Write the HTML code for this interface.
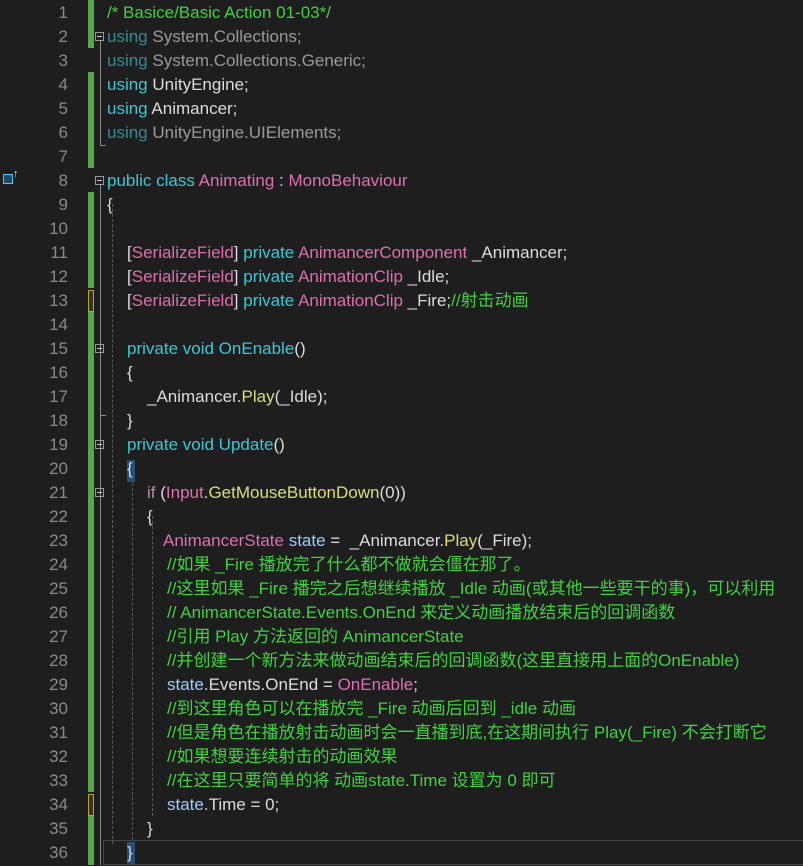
<!DOCTYPE html>
<html><head><meta charset="utf-8"><style>
body{margin:0;width:803px;height:865px;background:#1e1e1e;overflow:hidden;position:relative;font-family:"Liberation Sans","Noto Sans CJK SC",sans-serif;font-size:17px;}
.n{position:absolute;left:0;width:68px;text-align:right;color:#8a8a8a;height:24px;line-height:26px}
.l{position:absolute;height:24px;line-height:26px;white-space:pre;color:#dcdcdc}
.k{color:#3ec7d6}.t{color:#e06fb0}.c{color:#3fd23f}.m{color:#dcdc7a}.d{opacity:.65}.p{color:#9ccfff}.g{color:#b48ead}
.gb{position:absolute;left:88px;width:6px;background:#57a64a}
.yb{position:absolute;left:88px;width:4px;height:20px;border:1px solid #b8a430;background:#3a3418}
.f{position:absolute;left:95px;width:9px;height:9px;border:1px solid #9a9a9a;box-sizing:border-box}
.f:after{content:"";position:absolute;left:1px;top:3px;width:5px;height:1px;background:#ccc}
.v{position:absolute;width:0;border-left:1px solid #8a8a8a}
.h{position:absolute;height:0;border-top:1px solid #8a8a8a}
.dg{position:absolute;width:0;border-left:1px dashed #5a5a5a}
</style></head><body>
<div class="gb" style="top:0;height:48px"></div>
<div class="gb" style="top:72px;height:96px"></div>
<div class="gb" style="top:192px;height:96px"></div>
<div class="yb" style="top:290px"></div>
<div class="gb" style="top:312px;height:480px"></div>
<div class="yb" style="top:794px"></div>
<div class="gb" style="top:816px;height:49px"></div>
<div class="f" style="top:32px"></div><div class="v" style="left:100px;top:41px;height:104px"></div><div class="h" style="left:100px;top:145px;width:6px"></div>
<div class="f" style="top:176px"></div><div class="v" style="left:100px;top:185px;height:680px"></div>
<div class="f" style="top:344px"></div><div class="f" style="top:440px"></div><div class="f" style="top:488px"></div>
<div class="h" style="left:100px;top:415px;width:6px"></div>
<div class="dg" style="left:112px;top:204px;height:640px"></div>
<div class="dg" style="left:132px;top:468px;height:372px"></div>
<div class="dg" style="left:152px;top:516px;height:300px"></div>
<div style="position:absolute;left:103px;top:840px;width:700px;height:23px;border:1px solid #464646;border-right:none"></div>
<div style="position:absolute;left:127px;top:842px;width:8px;height:22px;background:#264f78"></div>
<div style="position:absolute;left:127px;top:460px;width:8px;height:22px;background:#264f78"></div>
<div style="position:absolute;left:3px;top:174px;width:8px;height:8px;border:1px solid #4fc1ff;background:#1c4a6a"></div>
<div style="position:absolute;left:13px;top:168px;color:#ddd;font-size:11px">↑</div>
<div class="n" style="top:0">1</div><div class="n" style="top:24px">2</div><div class="n" style="top:48px">3</div><div class="n" style="top:72px">4</div><div class="n" style="top:96px">5</div><div class="n" style="top:120px">6</div><div class="n" style="top:144px">7</div><div class="n" style="top:168px">8</div><div class="n" style="top:192px">9</div><div class="n" style="top:216px">10</div><div class="n" style="top:240px">11</div><div class="n" style="top:264px">12</div><div class="n" style="top:288px">13</div><div class="n" style="top:312px">14</div><div class="n" style="top:336px">15</div><div class="n" style="top:360px">16</div><div class="n" style="top:384px">17</div><div class="n" style="top:408px">18</div><div class="n" style="top:432px">19</div><div class="n" style="top:456px">20</div><div class="n" style="top:480px">21</div><div class="n" style="top:504px">22</div><div class="n" style="top:528px">23</div><div class="n" style="top:552px">24</div><div class="n" style="top:576px">25</div><div class="n" style="top:600px">26</div><div class="n" style="top:624px">27</div><div class="n" style="top:648px">28</div><div class="n" style="top:672px">29</div><div class="n" style="top:696px">30</div><div class="n" style="top:720px">31</div><div class="n" style="top:744px">32</div><div class="n" style="top:768px">33</div><div class="n" style="top:792px">34</div><div class="n" style="top:816px">35</div><div class="n" style="top:840px">36</div>
<div class="l c" style="top:0;left:107px">/* Basice/Basic Action 01-03*/</div>
<div class="l d" style="top:24px;left:107px"><span class="k">using</span> System.Collections;</div>
<div class="l d" style="top:48px;left:107px"><span class="k">using</span> System.Collections.Generic;</div>
<div class="l" style="top:72px;left:107px"><span class="k">using</span> UnityEngine;</div>
<div class="l" style="top:96px;left:107px"><span class="k">using</span> Animancer;</div>
<div class="l d" style="top:120px;left:107px"><span class="k">using</span> UnityEngine.UIElements;</div>
<div class="l" style="top:168px;left:107px"><span class="k">public class</span> <span class="t">Animating</span> : <span class="t">MonoBehaviour</span></div>
<div class="l" style="top:192px;left:107px">{</div>
<div class="l" style="top:240px;left:127px">[<span class="t">SerializeField</span>] <span class="k">private</span> <span class="t">AnimancerComponent</span> _Animancer;</div>
<div class="l" style="top:264px;left:127px">[<span class="t">SerializeField</span>] <span class="k">private</span> <span class="t">AnimationClip</span> _Idle;</div>
<div class="l" style="top:288px;left:127px">[<span class="t">SerializeField</span>] <span class="k">private</span> <span class="t">AnimationClip</span> _Fire;<span class="c">//射击动画</span></div>
<div class="l" style="top:336px;left:127px"><span class="k">private void</span> <span class="k">OnEnable</span>()</div>
<div class="l" style="top:360px;left:127px">{</div>
<div class="l" style="top:384px;left:147px">_Animancer.<span class="m">Play</span>(_Idle);</div>
<div class="l" style="top:408px;left:127px">}</div>
<div class="l" style="top:432px;left:127px"><span class="k">private void</span> <span class="k">Update</span>()</div>
<div class="l" style="top:456px;left:127px">{</div>
<div class="l" style="top:480px;left:147px"><span class="g">if</span> (<span class="t">Input</span>.<span class="m">GetMouseButtonDown</span>(0))</div>
<div class="l" style="top:504px;left:147px">{</div>
<div class="l" style="top:528px;left:163px"><span class="t">AnimancerState</span> <span class="p">state</span> =  _Animancer.<span class="m">Play</span>(_Fire);</div>
<div class="l c" style="top:552px;left:167px">//如果 _Fire 播放完了什么都不做就会僵在那了。</div>
<div class="l c" style="top:576px;left:167px">//这里如果 _Fire 播完之后想继续播放 _Idle 动画(或其他一些要干的事)，可以利用</div>
<div class="l c" style="top:600px;left:167px">// AnimancerState.Events.OnEnd 来定义动画播放结束后的回调函数</div>
<div class="l c" style="top:624px;left:167px">//引用 Play 方法返回的 AnimancerState</div>
<div class="l c" style="top:648px;left:167px">//并创建一个新方法来做动画结束后的回调函数(这里直接用上面的OnEnable)</div>
<div class="l" style="top:672px;left:167px"><span class="p">state</span>.Events.OnEnd = <span class="t">OnEnable</span>;</div>
<div class="l c" style="top:696px;left:167px">//到这里角色可以在播放完 _Fire 动画后回到 _idle 动画</div>
<div class="l c" style="top:720px;left:167px">//但是角色在播放射击动画时会一直播到底,在这期间执行 Play(_Fire) 不会打断它</div>
<div class="l c" style="top:744px;left:167px">//如果想要连续射击的动画效果</div>
<div class="l c" style="top:768px;left:167px">//在这里只要简单的将 动画state.Time 设置为 0 即可</div>
<div class="l" style="top:792px;left:167px"><span class="p">state</span>.Time = 0;</div>
<div class="l" style="top:816px;left:147px">}</div>
<div class="l" style="top:840px;left:127px">}</div>
</body></html>
